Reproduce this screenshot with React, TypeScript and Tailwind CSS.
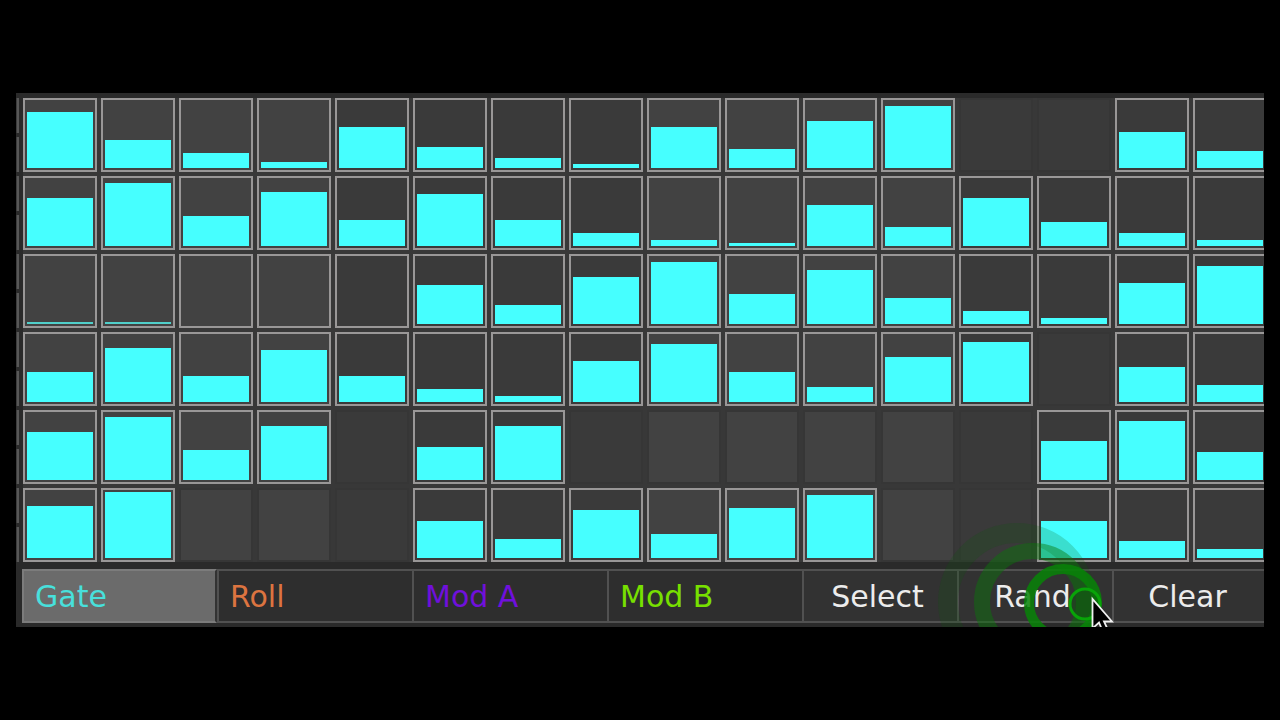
import { useState } from 'react';
import { clsx } from 'clsx';

type Step = number | null;

const MAX_LEVEL = 66;

// bar height per step, null = step switched off
const INITIAL_ROWS: Step[][] = [
  [56, 28, 15, 6, 41, 21, 10, 4, 41, 19, 47, 62, null, null, 36, 17],
  [48, 63, 30, 54, 26, 52, 26, 13, 6, 3, 41, 19, 48, 24, 13, 6],
  [2, 2, 0, 0, 0, 39, 19, 47, 62, 30, 54, 26, 13, 6, 41, 58],
  [30, 54, 26, 52, 26, 13, 6, 41, 58, 30, 15, 45, 60, null, 35, 17],
  [48, 63, 30, 54, null, 33, 54, null, null, null, null, null, null, 39, 59, 28],
  [52, 66, null, null, null, 37, 19, 48, 24, 50, 63, null, null, 37, 17, 9],
];

const MODES = [
  { label: 'Gate', color: 'text-[#48e0dc]' },
  { label: 'Roll', color: 'text-[#dc7440]' },
  { label: 'Mod A', color: 'text-[#7010dc]' },
  { label: 'Mod B', color: 'text-[#78e000]' },
];

function StepCell({ level, light, label, onClick }: { level: Step; light: boolean; label: string; onClick: () => void }) {
  return (
    <button
      type="button"
      aria-label={label}
      aria-pressed={level !== null}
      onClick={onClick}
      className={clsx(
        'flex h-[74px] w-[74px] shrink-0 items-end border-2 p-0.5',
        light ? 'bg-[#424242]' : 'bg-[#3a3a3a]',
        level === null ? 'border-[#363636]' : 'border-[#999797]'
      )}
    >
      {level !== null && level > 0 && (
        <span
          className={clsx('block w-full', level <= 2 ? 'bg-[#50cfca]' : 'bg-[#46ffff]')}
          style={{ height: Math.min(level, MAX_LEVEL) }}
        />
      )}
    </button>
  );
}

// Right edge of the neighbouring lane list, two lanes for each row of steps.
function LaneEdge() {
  return (
    <div className="flex w-1 shrink-0 flex-col gap-1">
      {Array.from({ length: 12 }, (_, i) => (
        <div key={i} className="h-[35px] w-[3px] border-r-2 border-[#575757] bg-[#3c3c3c]" />
      ))}
    </div>
  );
}

function ClickTrail() {
  return (
    <svg
      aria-hidden="true"
      className="pointer-events-none absolute bottom-0 left-[914px] h-[112px] w-[190px]"
      viewBox="930 515 190 112"
      fill="none"
    >
      <circle cx="1017" cy="602" r="69" stroke="#0a5a0a" strokeWidth="20" opacity="0.2" />
      <circle cx="1033" cy="602" r="51" stroke="#087808" strokeWidth="16" opacity="0.45" />
      <circle cx="1063" cy="603" r="34" stroke="#078407" strokeWidth="10" opacity="0.85" />
      <circle cx="1085" cy="604" r="15" fill="#0a5a0a" fillOpacity="0.4" stroke="#08a408" strokeWidth="3" />
      <path
        d="M1092.5 599 V628.5 L1099 622.5 L1103 632 L1108 630 L1104 621.5 H1112 Z"
        fill="#000"
        stroke="#f0f0f0"
        strokeWidth="1.8"
      />
    </svg>
  );
}

export default function App() {
  const [rows, setRows] = useState<Step[][]>(INITIAL_ROWS);
  const [mode, setMode] = useState('Gate');

  function toggleStep(row: number, col: number) {
    setRows((prev) =>
      prev.map((steps, r) => (r === row ? steps.map((s, c) => (c === col ? (s === null ? 33 : null) : s)) : steps))
    );
  }

  function randomize() {
    setRows((prev) =>
      prev.map((steps) => steps.map(() => (Math.random() < 0.2 ? null : Math.round(Math.random() * MAX_LEVEL))))
    );
  }

  function clear() {
    setRows((prev) => prev.map((steps) => steps.map(() => null)));
  }

  const actions = [
    { label: 'Select', onClick: () => {} },
    { label: 'Rand', onClick: randomize },
    { label: 'Clear', onClick: clear },
  ];

  return (
    <main className="flex min-h-screen flex-col justify-center bg-black px-4 font-['DejaVu_Sans',Verdana,sans-serif]">
      <div className="relative overflow-hidden bg-[#2a2a2a] pt-[5px] pb-1">
        <div className="flex gap-[3px]">
          <LaneEdge />
          <div className="flex shrink-0 flex-col gap-1 bg-[#383838]">
            {rows.map((steps, r) => (
              <div key={r} className="flex gap-1">
                {steps.map((level, c) => (
                  <StepCell
                    key={c}
                    level={level}
                    light={c % 8 < 4}
                    label={`Row ${r + 1}, step ${c + 1}`}
                    onClick={() => toggleStep(r, c)}
                  />
                ))}
              </div>
            ))}
          </div>
        </div>

        <div className="mt-[7px] ml-1.5 flex h-[54px] text-[30px] leading-none">
          <div role="tablist" aria-label="Edit mode" className="flex shrink-0">
            {MODES.map(({ label, color }) => (
              <button
                key={label}
                type="button"
                role="tab"
                aria-selected={mode === label}
                onClick={() => setMode(label)}
                className={clsx(
                  'w-[195px] border-y-2 border-l-2 pt-0.5 pl-[11px] text-left',
                  color,
                  mode === label
                    ? 'border-r-2 border-[#7c7c7c] border-r-[#333333] bg-[#6b6b6b]'
                    : 'border-[#515151] bg-[#2e2e2e]'
                )}
              >
                {label}
              </button>
            ))}
          </div>
          {actions.map(({ label, onClick }) => (
            <button
              key={label}
              type="button"
              onClick={onClick}
              className="w-[155px] shrink-0 border-y-2 border-l-2 border-[#515151] bg-[#323232] pt-0.5 pr-1.5 text-center text-[#ececec]"
            >
              {label}
            </button>
          ))}
        </div>

        <ClickTrail />
      </div>
    </main>
  );
}
